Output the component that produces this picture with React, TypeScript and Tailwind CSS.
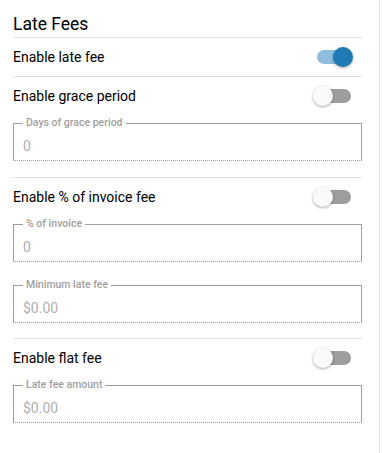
import React from "react";

function Toggle({ on }: { on: boolean }) {
  return (
    <div className="relative w-[40px] h-[20px] mr-[9px]">
      <div
        className={
          "absolute left-[4px] top-[3px] w-[34px] h-[14px] rounded-full " +
          (on ? "bg-[#8fbfdd]" : "bg-[#9e9e9e]")
        }
      />
      <div
        className={
          "absolute top-0 w-[20px] h-[20px] rounded-full shadow-[0_1px_3px_rgba(0,0,0,0.35)] " +
          (on ? "left-[20px] bg-[#1f7bb4]" : "left-0 bg-[#fafafa]")
        }
      />
    </div>
  );
}

function Row({ label, on }: { label: string; on: boolean }) {
  return (
    <div className="h-[38px] flex items-center justify-between">
      <span className="text-[14px] font-normal text-[#000000]">{label}</span>
      <Toggle on={on} />
    </div>
  );
}

function Field({ label, value }: { label: string; value: string }) {
  return (
    <fieldset
      className="border border-[#9e9e9e] px-[9px]"
      style={{ borderBottomStyle: "dotted" }}
    >
      <legend className="px-[3px] text-[10.5px] leading-[12px] font-medium text-[#a0a0a0]">
        {label}
      </legend>
      <div className="pt-[7px] pb-[4px] text-[14px] leading-[20px] text-[#b0b0b0]">{value}</div>
    </fieldset>
  );
}

export default function App() {
  return (
    <div
      className="w-[380px] h-[453px] bg-white border-r border-[#e6e6e6]"
      style={{ fontFamily: "Roboto, 'Noto Sans', sans-serif" }}
    >
      <div className="pl-[13px] pr-[17px]">
        <div className="pt-[12px] h-[38px] border-b border-[#e0e0e0]">
          <h2 className="text-[17.5px] leading-[24px] font-normal text-[#000000]">Late Fees</h2>
        </div>
        <div className="border-b border-[#e0e0e0]">
          <Row label="Enable late fee" on={true} />
        </div>
        <div className="border-b border-[#e0e0e0] pb-[16px]">
          <Row label="Enable grace period" on={false} />
          <div className="mt-[2px]">
            <Field label="Days of grace period" value="0" />
          </div>
        </div>
        <div className="border-b border-[#e0e0e0] pb-[15px]">
          <Row label="Enable % of invoice fee" on={false} />
          <div className="mt-[2px] flex flex-col gap-[17px]">
            <Field label="% of invoice" value="0" />
            <Field label="Minimum late fee" value="$0.00" />
          </div>
        </div>
        <div>
          <Row label="Enable flat fee" on={false} />
          <div className="mt-[2px]">
            <Field label="Late fee amount" value="$0.00" />
          </div>
        </div>
      </div>
    </div>
  );
}
